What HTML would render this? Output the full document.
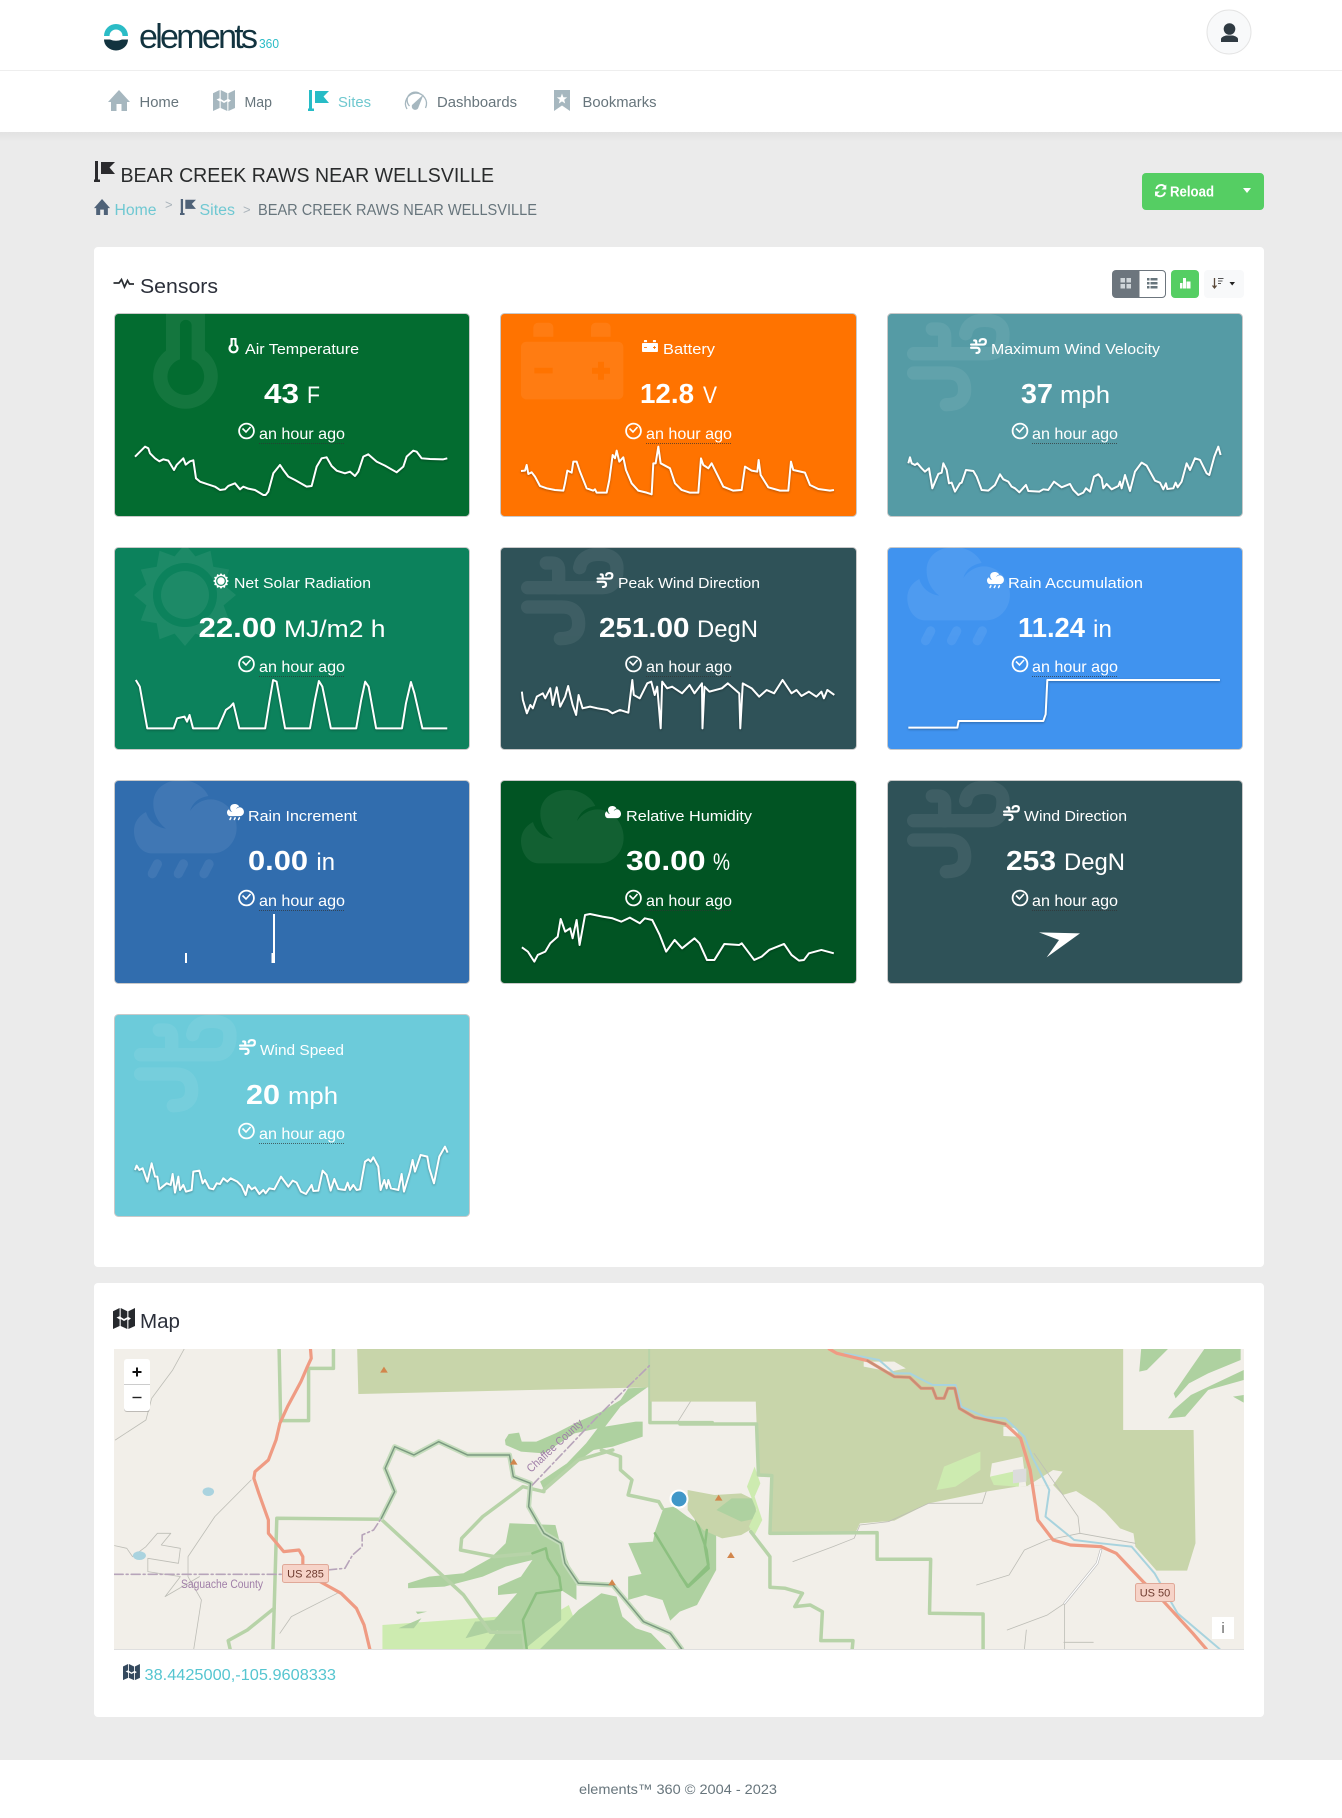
<!DOCTYPE html>
<html lang="en">
<head>
<meta charset="utf-8">
<title>BEAR CREEK RAWS NEAR WELLSVILLE</title>
<style>
html,body{margin:0;padding:0}
body{position:relative;width:1342px;height:1818px;overflow:hidden;background:#ebebeb;font-family:"Liberation Sans",sans-serif}
.abs{position:absolute}
#top{left:0;top:0;width:1342px;height:132px;background:#fff}
#topline{left:0;top:70px;width:1342px;height:1px;background:#eeeeee}
#shadow{left:0;top:132px;width:1342px;height:10px;background:linear-gradient(#e2e2e2,#ebebeb)}
.panel{left:94px;width:1170px;background:#fff;border-radius:4px}
#foot{left:0;top:1760px;width:1342px;height:58px;background:#fff}
svg{position:absolute;display:block;font-family:"Liberation Sans",sans-serif}
svg text{white-space:pre}
.card{overflow:hidden}
.t{font-size:15px;fill:#fff}
.v{font-size:28px;font-weight:700;fill:#fff}
.u{font-size:24px;fill:#fff}
.a{font-size:16px;fill:#fff}
.d{stroke:rgba(50,50,50,.7);stroke-width:1;stroke-dasharray:1 1;fill:none}
.s{fill:none;stroke:#fff;stroke-width:2;stroke-linejoin:round;vector-effect:non-scaling-stroke}
.sh{filter:drop-shadow(0 1px 1px rgba(0,0,0,.3))}
.n{font-size:14.5px;fill:#67757c}
.m,.m *{fill:none;vector-effect:non-scaling-stroke;stroke-linejoin:round;stroke-linecap:round}
.b{stroke:#b7d3a8;stroke-width:3.5}
.thin{stroke:#bdbdb6;stroke-width:.8}
.riv{stroke:#a8d3de;stroke-width:2}
.rd{stroke:#ef9b83;stroke-width:3.2}
.co{stroke:#b7a4ba;stroke-width:1.6;stroke-dasharray:9 3 2 3}
.bg{opacity:.07}
</style>
</head>
<body>
<div class="abs" id="top"></div>
<div class="abs" id="topline"></div>
<div class="abs" id="shadow"></div>
<div class="abs panel" style="top:247px;height:1020px"></div>
<div class="abs panel" style="top:1283px;height:434px"></div>
<div class="abs" id="foot"></div>

<svg width="0" height="0" style="left:0;top:0">
<defs>
<g id="wind" fill="none" stroke="#fff" stroke-width="40" stroke-linecap="round" stroke-linejoin="round">
<path d="M20 119H243Q288 119 288 62Q288 19 233 19Q183 19 176 59"/>
<path d="M76 45H93Q113 45 113 67V119"/>
<path d="M20 177H123Q173 177 173 227Q173 272 118 272"/>
</g>
<path id="cloud" fill="#fff" d="M53 220C18 220 0 183 0 153C0 128 13 108 36 96C43 123 68 143 96 146C73 128 58 103 58 70C58 28 93 0 140 0C178 0 210 20 223 48C193 53 176 68 168 93C183 70 208 58 230 58C273 58 308 98 308 143C308 188 273 220 238 220Z"/>
<g id="rain">
<use href="#cloud"/>
<path fill="none" stroke="#fff" stroke-width="28" stroke-linecap="round" d="M70 252L55 281M148 252L133 281M225 252L210 281"/>
</g>
<path id="sun" fill="#fff" fill-rule="evenodd" d="M51 0L38.6 10.4L44.2 25.5L28.3 28.3L25.5 44.2L10.4 38.6L0 51L-10.4 38.6L-25.5 44.2L-28.3 28.3L-44.2 25.5L-38.6 10.4L-51 0L-38.6 -10.4L-44.2 -25.5L-28.3 -28.3L-25.5 -44.2L-10.4 -38.6L0 -51L10.4 -38.6L25.5 -44.2L28.3 -28.3L44.2 -25.5L38.6 -10.4ZM32 0A32 32 0 1 0 -32 0A32 32 0 1 0 32 0ZM24 0A24 24 0 1 0 -24 0A24 24 0 1 0 24 0Z"/>
<path id="battery" fill="#fff" fill-rule="evenodd" d="M16 57H291a16 16 0 0 1 16 16V214a16 16 0 0 1-16 16H16a16 16 0 0 1-16-16V73a16 16 0 0 1 16-16ZM40 135h55v17H40ZM231 117h18v18h18v18h-18v18h-18v-18h-18v-18h18ZM37 42V14a14 14 0 0 1 14-14h32a14 14 0 0 1 14 14V42ZM210 42V14a14 14 0 0 1 14-14h31a14 14 0 0 1 14 14V42Z"/>
<path id="thermo" fill="#fff" fill-rule="evenodd" d="M38 0H155V122A97 97 0 1 1 38 122ZM80 47A17 17 0 0 1 115 47V148A55 55 0 1 1 80 148Z"/>
<g id="clock" fill="none" stroke="#fff" stroke-width="1.8"><circle r="7.4"/><path d="M-4-2.5L-.5 1L4-4" stroke-width="1.6"/></g>
<g id="mapi"><path d="M0 3.2L6.6 0V8.2L3.5 9.5L6.6 11.4V18L0 21ZM7.7 0L14.3 3.2V9.2L11 11L7.7 9ZM7.7 11L11 13L14.3 11.3V21L7.7 18ZM15.4 3.2L22 0V18L15.4 21V12.2L18 10.5L15.4 9Z"/></g>
<g id="flag"><path d="M1 0H4V18.5H6V21H0V18.5H1ZM7 1H21L15.5 6.5L21 13H7Z"/></g>
<g id="house"><path d="M11 0L22 12H19V21H13.5V14H8.5V21H3V12H0Z"/></g>
</defs>
</svg>

<!-- Header, nav, title -->
<svg class="abs" style="left:0;top:0" width="1342" height="310" viewBox="0 0 1342 310">
<path d="M104 36A12 12 0 0 1 128 36H122.5A6.5 6.5 0 0 0 109.5 36Z" fill="#2bbcc6"/>
<path d="M104 39.5H110Q116 42 122 39.5H128A12 11 0 0 1 104 39.5Z" fill="#12333f"/>
<text x="139" y="48" font-size="34" fill="#12333f" textLength="119" lengthAdjust="spacing">elements</text>
<text x="259" y="48" font-size="13" fill="#2bbcc6" textLength="20" lengthAdjust="spacingAndGlyphs">360</text>
<circle cx="1229" cy="32" r="22" fill="#f8f9fa" stroke="#e4e4e4"/>
<circle cx="1229.5" cy="29" r="5.8" fill="#2f3a42"/>
<path d="M1221 42V39Q1221 37 1226 35.5H1233Q1238 37 1238 39V42Z" fill="#2f3a42"/>

<g fill="#a6b7bf">
<use href="#house" transform="translate(108,90)"/>
<use href="#mapi" transform="translate(213,90)"/>
<path d="M407 109A10.500 10.500 0 1 1 425.500 108M409.500 106A8 8 0 0 1 421 94.500" fill="none" stroke="#a6b7bf" stroke-width="1.3"/>
<path d="M423.500 94.500L418 108.500A3.500 3.500 0 0 1 412 105Z"/>
<path fill-rule="evenodd" d="M554 90H570V111L562 105.5L554 111ZM562 93.5L563.4 97.2L567.2 97.4L564.2 99.8L565.2 103.5L562 101.4L558.8 103.5L559.8 99.8L556.8 97.4L560.6 97.2Z"/>
</g>
<use href="#flag" transform="translate(308,90)" fill="#27bcc6"/>
<text class="n" x="139.500" y="107" textLength="39.500" lengthAdjust="spacingAndGlyphs">Home</text>
<text class="n" x="244.500" y="107" textLength="27.500" lengthAdjust="spacingAndGlyphs">Map</text>
<text class="n" x="338" y="107" textLength="33" lengthAdjust="spacingAndGlyphs" style="fill:#6fc8cf">Sites</text>
<text class="n" x="437" y="107" textLength="80" lengthAdjust="spacingAndGlyphs">Dashboards</text>
<text class="n" x="582.500" y="107" textLength="74" lengthAdjust="spacingAndGlyphs">Bookmarks</text>

<use href="#flag" transform="translate(94,161)" fill="#2b2b2e"/>
<text x="120.500" y="182" font-size="20" fill="#292b2c" textLength="373.500" lengthAdjust="spacingAndGlyphs">BEAR CREEK RAWS NEAR WELLSVILLE</text>
<use href="#house" transform="translate(94,199) scale(.73,.76)" fill="#4f6278"/>
<text x="114.500" y="215" font-size="15.5" fill="#6fc8d2" textLength="42" lengthAdjust="spacingAndGlyphs">Home</text>
<text x="165" y="209" font-size="13" fill="#a9b3ba">&gt;</text>
<use href="#flag" transform="translate(180,199) scale(.76)" fill="#4f6278"/>
<text x="199.500" y="215" font-size="15.5" fill="#6fc8d2" textLength="35.500" lengthAdjust="spacingAndGlyphs">Sites</text>
<text x="243" y="214" font-size="13" fill="#a9b3ba">&gt;</text>
<text x="258" y="215" font-size="15.5" fill="#67757c" textLength="279" lengthAdjust="spacingAndGlyphs">BEAR CREEK RAWS NEAR WELLSVILLE</text>

<rect x="1142" y="173" width="122" height="37" rx="4" fill="#55ce63"/>
<path d="M1156.3 189a5 5 0 0 1 8.6-2.4M1165 192.4a5 5 0 0 1-8.6 2.2" fill="none" stroke="#fff" stroke-width="1.9"/>
<path d="M1166.3 184.5V189.5H1161.5ZM1155 196.5V191.5H1159.8Z" fill="#fff"/>
<text x="1170" y="196.5" font-size="14.5" font-weight="700" fill="#fff" textLength="44" lengthAdjust="spacingAndGlyphs">Reload</text>
<path d="M1243 188H1251L1247 193Z" fill="#fff"/>

<path d="M1112 274a4 4 0 0 1 4-4H1139V298H1116a4 4 0 0 1-4-4Z" fill="#6c757d"/>
<path d="M1139 270.5H1162a3.5 3.5 0 0 1 3.500 3.500V294a3.500 3.500 0 0 1-3.500 3.500H1139Z" fill="#fff" stroke="#6c757d"/>
<g fill="#cfd5d9"><rect x="1120.500" y="278" width="4.500" height="4.500"/><rect x="1126.500" y="278" width="4.500" height="4.500"/><rect x="1120.500" y="284" width="4.500" height="4.500"/><rect x="1126.500" y="284" width="4.500" height="4.500"/></g>
<g fill="#67757c"><rect x="1147" y="278" width="2.500" height="2.500"/><rect x="1150.500" y="278" width="7" height="2.500"/><rect x="1147" y="282" width="2.500" height="2.500"/><rect x="1150.500" y="282" width="7" height="2.500"/><rect x="1147" y="286" width="2.500" height="2.500"/><rect x="1150.500" y="286" width="7" height="2.500"/></g>
<rect x="1171" y="270" width="28" height="28" rx="4" fill="#55ce63"/>
<path d="M1180 288.500V283H1182.500V288.500ZM1183 288.500V278H1186V288.500ZM1186.500 288.500V281.500H1190.500V288.500Z" fill="#fff"/>
<rect x="1204" y="270" width="40" height="28" rx="4" fill="#f8f9fa"/>
<path d="M1214.500 278V287.500M1212.500 285.500L1214.500 288L1216.500 285.500" fill="none" stroke="#5b4a3a" stroke-width="1.3"/>
<path d="M1218 278.500H1223.500M1218 281H1222.500M1218 283.500H1221" stroke="#555" stroke-width="1.100"/>
<path d="M1229.500 282H1235L1232.200 285.500Z" fill="#222"/>

<path d="M113.500 283H119L121.500 279.500L124.500 287L127.500 280.500L129.500 284H134" fill="none" stroke="#2b2f33" stroke-width="1.700"/>
<text x="140" y="293" font-size="20.500" fill="#2b2f3a" textLength="78" lengthAdjust="spacingAndGlyphs">Sensors</text>
</svg>

<!-- Card 1 -->
<svg class="abs card" style="left:114px;top:313px" width="356" height="204" viewBox="114 313 356 204">
<rect x="114.500" y="313.500" width="355" height="203" rx="4" fill="#036c30" stroke="#c9c9c9"/>
<use href="#thermo" class="bg" transform="translate(153.300,310) scale(.3333)"/>
<use href="#thermo" transform="translate(228.500,338) scale(.052)"/>
<text class="t" x="245" y="354" textLength="114" lengthAdjust="spacingAndGlyphs">Air Temperature</text>
<text class="v" x="264" y="403" textLength="35" lengthAdjust="spacingAndGlyphs">43</text>
<text class="u" x="307" y="403" textLength="13" lengthAdjust="spacingAndGlyphs">F</text>
<use href="#clock" x="246.500" y="431"/>
<text class="a" x="259" y="439" textLength="86" lengthAdjust="spacingAndGlyphs">an hour ago</text>
<line class="d" x1="259" x2="345" y1="443.500" y2="443.500"/>
<g class="sh"><polyline class="s" transform="translate(100,260) scale(.3333)" points="105,590 120,575 135,560 145,565 150,580 165,595 178,604 190,598 205,602 222,630 230,615 250,595 257,614 270,604 280,601 288,655 300,665 320,672 345,680 360,690 375,688 385,678 405,670 420,688 430,680 445,686 465,690 490,705 497,705 505,695 520,640 540,615 550,630 565,650 585,660 620,680 635,678 650,620 665,595 680,592 695,618 710,632 735,640 750,635 765,648 775,635 790,590 805,583 830,605 855,617 890,637 910,620 920,590 940,572 950,575 965,595 990,597 1030,598 1042,595"/></g>
</svg>

<!-- Card 2 -->
<svg class="abs card" style="left:500px;top:313px" width="357" height="204" viewBox="500 313 357 204">
<rect x="500.500" y="313.500" width="356" height="203" rx="4" fill="#ff7300" stroke="#c9c9c9"/>
<use href="#battery" class="bg" transform="translate(521,322.700) scale(.3333)"/>
<use href="#battery" transform="translate(642,340) scale(.052)"/>
<text class="t" x="663" y="354" textLength="52" lengthAdjust="spacingAndGlyphs">Battery</text>
<text class="v" x="640" y="403" textLength="54" lengthAdjust="spacingAndGlyphs">12.8</text>
<text class="u" x="703" y="403" textLength="14" lengthAdjust="spacingAndGlyphs">V</text>
<use href="#clock" x="633.500" y="431"/>
<text class="a" x="646" y="439" textLength="86" lengthAdjust="spacingAndGlyphs">an hour ago</text>
<line class="d" x1="646" x2="732" y1="443.500" y2="443.500"/>
<g class="sh"><polyline class="s" transform="translate(490,300) scale(.3333)" points="93,513 105,512 110,495 115,522 125,517 135,530 150,558 170,565 195,570 220,572 225,550 232,512 245,518 250,485 260,485 270,515 290,565 310,572 315,568 320,578 350,578 358,540 368,465 375,475 380,452 388,485 400,472 408,510 425,550 445,572 470,578 485,583 490,490 497,490 505,440 512,490 540,505 555,550 575,570 600,578 625,578 633,475 640,495 655,505 665,490 680,520 700,560 730,572 755,570 765,500 785,512 802,515 806,480 812,525 835,562 870,572 895,572 903,485 910,510 945,518 960,555 985,567 1020,572 1032,570"/></g>
</svg>

<!-- Card 3 -->
<svg class="abs card" style="left:887px;top:313px" width="356" height="204" viewBox="887 313 356 204">
<rect x="887.500" y="313.500" width="355" height="203" rx="4" fill="#559ba5" stroke="#c9c9c9"/>
<use href="#wind" class="bg" transform="translate(907,314) scale(.3333)"/>
<use href="#wind" transform="translate(970,338) scale(.055)"/>
<text class="t" x="991" y="354" textLength="169" lengthAdjust="spacingAndGlyphs">Maximum Wind Velocity</text>
<text class="v" x="1021" y="403" textLength="32" lengthAdjust="spacingAndGlyphs">37</text>
<text class="u" x="1060" y="403" textLength="50" lengthAdjust="spacingAndGlyphs">mph</text>
<use href="#clock" x="1020" y="431"/>
<text class="a" x="1032" y="439" textLength="86" lengthAdjust="spacingAndGlyphs">an hour ago</text>
<line class="d" x1="1032" x2="1118" y1="443.500" y2="443.500"/>
<g class="sh"><polyline class="s" transform="translate(880,300) scale(.3333)" points="85,490 90,472 95,490 105,495 112,490 125,505 135,515 147,505 157,565 175,522 185,518 190,490 200,510 207,550 215,548 225,575 240,550 245,548 258,510 280,513 290,530 305,570 325,572 345,555 360,523 370,538 385,545 395,560 405,565 418,577 438,555 445,573 478,575 490,568 505,570 522,545 545,562 570,552 580,570 595,585 610,578 618,565 630,575 642,530 655,523 665,535 670,565 680,552 695,568 715,558 720,545 725,565 735,525 750,573 765,515 785,488 800,497 825,542 840,548 850,568 858,550 862,567 880,565 887,548 893,562 905,545 920,490 930,510 945,475 960,480 980,520 988,525 1003,470 1015,440 1022,465"/></g>
</svg>

<!-- Card 4 -->
<svg class="abs card" style="left:114px;top:547px" width="356" height="203" viewBox="114 547 356 203">
<rect x="114.500" y="547.500" width="355" height="202" rx="4" fill="#0c825c" stroke="#c9c9c9"/>
<use href="#sun" class="bg" transform="translate(185,595)"/>
<use href="#sun" transform="translate(221,581) scale(.155)"/>
<text class="t" x="234" y="588" textLength="137" lengthAdjust="spacingAndGlyphs">Net Solar Radiation</text>
<text class="v" x="198.500" y="637" textLength="78" lengthAdjust="spacingAndGlyphs">22.00</text>
<text class="u" x="284" y="637" textLength="101.500" lengthAdjust="spacingAndGlyphs">MJ/m2 h</text>
<use href="#clock" x="246.500" y="664"/>
<text class="a" x="259" y="672" textLength="86" lengthAdjust="spacingAndGlyphs">an hour ago</text>
<line class="d" x1="259" x2="345" y1="676.500" y2="676.500"/>
<g class="sh"><polyline class="s" transform="translate(100,540) scale(.4975,.3333)" points="72,420 80,440 95,565 148,565 155,535 170,530 175,545 180,525 187,565 237,565 253,510 262,500 268,490 280,565 332,565 340,490 348,420 355,425 372,565 422,565 432,480 440,423 447,440 464,565 515,565 525,480 533,425 540,440 555,565 607,565 615,490 625,426 632,460 648,565 698,565"/></g>
</svg>

<!-- Card 5 -->
<svg class="abs card" style="left:500px;top:547px" width="357" height="203" viewBox="500 547 357 203">
<rect x="500.500" y="547.500" width="356" height="202" rx="4" fill="#2f5258" stroke="#c9c9c9"/>
<use href="#wind" class="bg" transform="translate(521,548) scale(.3333)"/>
<use href="#wind" transform="translate(596.500,572) scale(.055)"/>
<text class="t" x="618" y="588" textLength="142" lengthAdjust="spacingAndGlyphs">Peak Wind Direction</text>
<text class="v" x="599" y="637" textLength="90.500" lengthAdjust="spacingAndGlyphs">251.00</text>
<text class="u" x="697" y="637" textLength="61" lengthAdjust="spacingAndGlyphs">DegN</text>
<use href="#clock" x="633.500" y="664"/>
<text class="a" x="646" y="672" textLength="86" lengthAdjust="spacingAndGlyphs">an hour ago</text>
<line class="d" x1="646" x2="732" y1="676.500" y2="676.500"/>
<g class="sh"><polyline class="s" transform="translate(100,540) scale(.4975,.3333)" points="848,455 850,480 858,520 865,495 870,505 878,470 890,460 895,475 905,445 910,495 918,442 925,500 935,470 941,438 950,495 957,525 962,465 970,505 985,500 1000,505 1020,510 1030,520 1045,510 1062,518 1070,420 1073,465 1085,475 1100,430 1108,425 1115,465 1120,440 1127,565 1130,425 1140,445 1150,440 1170,460 1185,435 1195,460 1210,430 1211,565 1215,440 1225,455 1250,445 1262,430 1285,460 1287,565 1292,430 1310,445 1325,470 1340,450 1355,460 1372,420 1390,460 1400,450 1410,468 1425,455 1440,470 1450,455 1455,475 1462,450 1476,465"/></g>
</svg>

<!-- Card 6 -->
<svg class="abs card" style="left:887px;top:547px" width="356" height="203" viewBox="887 547 356 203">
<rect x="887.500" y="547.500" width="355" height="202" rx="4" fill="#4093ef" stroke="#c9c9c9"/>
<use href="#rain" class="bg" transform="translate(907.300,547) scale(.3333)"/>
<use href="#rain" transform="translate(987,572) scale(.055)"/>
<text class="t" x="1008" y="588" textLength="135" lengthAdjust="spacingAndGlyphs">Rain Accumulation</text>
<text class="v" x="1018" y="637" textLength="67" lengthAdjust="spacingAndGlyphs">11.24</text>
<text class="u" x="1093" y="637" textLength="19" lengthAdjust="spacingAndGlyphs">in</text>
<use href="#clock" x="1020" y="664"/>
<text class="a" x="1032" y="672" textLength="86" lengthAdjust="spacingAndGlyphs">an hour ago</text>
<line class="d" x1="1032" x2="1118" y1="676.500" y2="676.500"/>
<g class="sh"><polyline class="s" transform="translate(880,300) scale(.3333)" points="85,1283 232,1283 236,1263 490,1263 497,1243 502,1140 1020,1140"/></g>
</svg>

<!-- Card 7 -->
<svg class="abs card" style="left:114px;top:780px" width="356" height="204" viewBox="114 780 356 204">
<rect x="114.500" y="780.500" width="355" height="203" rx="4" fill="#316dae" stroke="#c9c9c9"/>
<use href="#rain" class="bg" transform="translate(134,780) scale(.3333)"/>
<use href="#rain" transform="translate(227,804) scale(.055)"/>
<text class="t" x="248" y="821" textLength="109" lengthAdjust="spacingAndGlyphs">Rain Increment</text>
<text class="v" x="248" y="870" textLength="60" lengthAdjust="spacingAndGlyphs">0.00</text>
<text class="u" x="316.400" y="870" textLength="18.600" lengthAdjust="spacingAndGlyphs">in</text>
<use href="#clock" x="246.500" y="898"/>
<text class="a" x="259" y="906" textLength="86" lengthAdjust="spacingAndGlyphs">an hour ago</text>
<line class="d" x1="259" x2="345" y1="910.500" y2="910.500"/>
<path d="M186 953V963M274 914V963M272.500 953V963" stroke="#fff" stroke-width="2" fill="none"/>
</svg>

<!-- Card 8 -->
<svg class="abs card" style="left:500px;top:780px" width="357" height="204" viewBox="500 780 357 204">
<rect x="500.500" y="780.500" width="356" height="203" rx="4" fill="#015423" stroke="#c9c9c9"/>
<use href="#cloud" class="bg" transform="translate(521,790) scale(.3333)"/>
<use href="#cloud" transform="translate(605,806) scale(.052,.055)"/>
<text class="t" x="626" y="821" textLength="126" lengthAdjust="spacingAndGlyphs">Relative Humidity</text>
<text class="v" x="626" y="870" textLength="79.500" lengthAdjust="spacingAndGlyphs">30.00</text>
<text class="u" x="713" y="870" textLength="17" lengthAdjust="spacingAndGlyphs">%</text>
<use href="#clock" x="633.500" y="898"/>
<text class="a" x="646" y="906" textLength="86" lengthAdjust="spacingAndGlyphs">an hour ago</text>
<line class="d" x1="646" x2="732" y1="910.500" y2="910.500"/>
<g class="sh"><polyline class="s" transform="translate(100,540) scale(.4975,.3333)" points="848,1222 860,1235 873,1265 880,1245 895,1235 905,1210 920,1190 926,1137 935,1175 945,1165 950,1195 958,1140 964,1215 975,1125 985,1122 1010,1130 1030,1135 1048,1145 1065,1133 1085,1150 1095,1135 1110,1140 1125,1185 1138,1235 1155,1200 1170,1225 1195,1195 1205,1210 1220,1260 1235,1260 1255,1212 1285,1215 1290,1210 1315,1260 1330,1250 1345,1230 1375,1212 1390,1245 1405,1262 1415,1260 1425,1240 1450,1230 1475,1240"/></g>
</svg>

<!-- Card 9 -->
<svg class="abs card" style="left:887px;top:780px" width="356" height="204" viewBox="887 780 356 204">
<rect x="887.500" y="780.500" width="355" height="203" rx="4" fill="#2f5258" stroke="#c9c9c9"/>
<use href="#wind" class="bg" transform="translate(907,781) scale(.3333)"/>
<use href="#wind" transform="translate(1003,805) scale(.055)"/>
<text class="t" x="1024" y="821" textLength="103" lengthAdjust="spacingAndGlyphs">Wind Direction</text>
<text class="v" x="1006" y="870" textLength="50" lengthAdjust="spacingAndGlyphs">253</text>
<text class="u" x="1064" y="870" textLength="61" lengthAdjust="spacingAndGlyphs">DegN</text>
<use href="#clock" x="1020" y="898"/>
<text class="a" x="1032" y="906" textLength="86" lengthAdjust="spacingAndGlyphs">an hour ago</text>
<line class="d" x1="1032" x2="1118" y1="910.500" y2="910.500"/>
<polygon transform="translate(880,770) scale(.3333)" points="477,487 600,490 500,562 537,510" fill="#fff"/>
</svg>

<!-- Card 10 -->
<svg class="abs card" style="left:114px;top:1014px" width="356" height="203" viewBox="114 1014 356 203">
<rect x="114.500" y="1014.500" width="355" height="202" rx="4" fill="#6ccbda" stroke="#c9c9c9"/>
<use href="#wind" class="bg" transform="translate(134,1015) scale(.3333)"/>
<use href="#wind" transform="translate(239,1039) scale(.055)"/>
<text class="t" x="260" y="1055" textLength="84" lengthAdjust="spacingAndGlyphs">Wind Speed</text>
<text class="v" x="246" y="1104" textLength="34" lengthAdjust="spacingAndGlyphs">20</text>
<text class="u" x="288" y="1104" textLength="50" lengthAdjust="spacingAndGlyphs">mph</text>
<use href="#clock" x="246.500" y="1131"/>
<text class="a" x="259" y="1139" textLength="86" lengthAdjust="spacingAndGlyphs">an hour ago</text>
<line class="d" x1="259" x2="345" y1="1143.500" y2="1143.500"/>
<g class="sh"><polyline class="s" transform="translate(100,1000) scale(.3333)" points="105,510 110,497 118,510 128,505 142,545 155,490 165,530 172,530 178,568 200,550 212,555 218,522 225,578 235,530 240,570 250,555 258,575 275,570 280,515 298,512 308,550 315,540 328,565 340,568 350,550 360,552 370,535 382,545 392,535 412,545 425,558 437,585 445,555 455,568 465,562 478,582 490,570 497,580 508,565 523,568 543,530 565,560 578,542 590,548 603,575 618,582 635,555 640,573 655,572 668,512 680,525 692,572 703,537 715,567 735,570 743,548 750,570 760,555 770,570 780,568 795,485 805,478 812,485 820,472 835,500 842,570 853,540 860,565 865,540 873,565 895,570 905,522 912,575 930,515 938,480 945,515 962,465 982,470 988,505 1002,550 1018,470 1035,440 1043,458"/></g>
</svg>

<!-- Map panel header and link, footer -->
<svg class="abs" style="left:0;top:1300px" width="1342" height="518" viewBox="0 1300 1342 518">
<use href="#mapi" transform="translate(113,1308)" fill="#26292d"/>
<text x="140" y="1328" font-size="20.500" fill="#2b2f3a" textLength="40" lengthAdjust="spacingAndGlyphs">Map</text>
<line x1="114" x2="1244" y1="1649.500" y2="1649.500" stroke="#dfdfdf"/>
<use href="#mapi" transform="translate(123,1664) scale(.77)" fill="#34495e"/>
<text x="144.500" y="1680" font-size="16" fill="#55c5d0" textLength="191.500" lengthAdjust="spacingAndGlyphs">38.4425000,-105.9608333</text>
<text x="579" y="1794" font-size="14" fill="#67757c" textLength="198" lengthAdjust="spacingAndGlyphs">elements™ 360 © 2004 - 2023</text>
</svg>

<!-- Map -->
<svg class="abs" style="left:114px;top:1349px" width="1130" height="300" viewBox="114 1349 1130 300">
<rect x="114" y="1349" width="1131" height="300" fill="#f2efe9"/>

<g transform="translate(100,1300) scale(.3827,.3333)">
<polygon fill="#c8d5aa" points="672,147 1435,147 1435,262 675,282"/>
<polygon fill="#cdebb0" points="738,975 1040,950 1045,1047 738,1047"/>
<polygon fill="#cdebb0" points="1105,1047 1160,960 1225,915 1240,960 1190,1047"/>
<g fill="#aed1a0">
<polygon points="1058,420 1068,402 1095,398 1102,425 1140,425 1190,400 1250,365 1310,335 1360,300 1380,265 1430,262 1360,320 1320,380 1400,365 1418,365 1418,410 1340,440 1290,450 1230,500 1160,570 1150,545 1220,490 1270,430 1300,385 1240,400 1160,460 1100,455 1060,435"/>
<polygon points="1070,670 1190,675 1200,720 1245,850 1245,900 1205,870 1205,960 1160,1000 1110,1047 1005,1047 1040,990 955,1015 980,965 1030,960 1090,880 1040,885 1040,860 1100,830 1130,780 1060,800 1000,830 900,860 805,865 805,850 860,830 950,820 1020,775 1060,730"/>
<polygon points="1150,1047 1200,990 1250,930 1310,880 1350,890 1365,950 1400,985 1440,1000 1480,1047"/>
<polygon points="1380,730 1445,725 1450,695 1472,625 1500,620 1535,650 1610,700 1610,810 1560,915 1515,935 1490,962 1470,900 1425,885 1380,900 1380,830 1415,822"/>
<polygon points="780,985 840,955 820,985"/>
<polygon points="825,935 855,935 830,942"/>
</g>
<polyline class="m thin" points="220,147 190,210 135,295 120,360 40,420"/>
<polyline class="m thin" points="395,540 300,650 230,770 230,830 265,900 245,1047"/>
<polyline class="m thin" points="38,737 70,745 85,770 120,740 150,700 185,700 160,735 210,745 205,790 125,775 125,815 210,830 170,890 260,830"/>
<polyline class="m thin" points="470,1000 500,950 620,880"/>
<polyline class="m thin" points="1510,365 1540,310 1568,260"/>
<polyline class="m thin" points="1440,250 1500,210 1568,170"/>
<ellipse cx="283" cy="575" rx="15" ry="13" fill="#aad3df"/>
<ellipse cx="103" cy="767" rx="17" ry="13" fill="#aad3df"/>
<g class="m b">
<polyline points="468,147 472,362 545,362 545,205 610,205 610,147"/>
<polyline points="452,1047 462,655 735,658 950,885 1020,997 1105,997 1110,1047"/>
<polyline points="340,1047 335,1022 385,990 455,925"/>
<polyline points="1160,575 1105,560 1000,650 945,715 942,750 1030,770 1130,760"/>
<polyline points="1437,147 1437,368 1600,368"/>
<polyline points="1310,450 1360,470 1360,510 1390,540 1380,585 1460,605 1470,625"/>
<polyline points="1160,570 1250,480 1340,450"/>
</g>
<polyline class="m" stroke="#8cc080" stroke-width="2.500" points="1130,760 1165,745 1170,775 1200,830 1205,870 1140,880 1105,960 1115,1047"/>
<polyline class="m" stroke="#8cc080" stroke-width="2.500" points="1450,700 1535,860 1590,795 1585,750 1555,650"/>
<polyline class="m" stroke="#c5dcbc" stroke-width="5" points="735,655 770,575 745,505 770,440 820,465 885,425 960,465 1070,465 1080,530 1125,550 1120,620 1160,700 1205,730 1215,790 1250,850 1340,855 1420,965 1490,1000 1520,1047"/>
<polyline class="m" stroke="#7b9a80" stroke-width="1.500" points="735,655 770,575 745,505 770,440 820,465 885,425 960,465 1070,465 1080,530 1125,550 1120,620 1160,700 1205,730 1215,790 1250,850 1340,855 1420,965 1490,1000 1520,1047"/>
<polyline class="m co" points="37,823 480,823"/>
<polyline class="m co" points="595,810 640,805 660,765 685,740 685,705 715,690 735,655"/>
<polyline class="m co" points="1130,555 1300,350 1480,147"/>
<polyline class="m rd" points="550,147 552,175 540,205 525,245 490,320 470,370 460,420 440,480 405,515 402,535 415,580 440,660 440,700 480,755 520,750 530,770 530,795"/>
<polyline class="m rd" points="575,845 630,880 670,925 690,975 705,1047"/>
<g fill="#d2864c">
<polygon points="732,218 742,200 752,218"/>
<polygon points="1071,494 1081,476 1091,494"/>
<polygon points="1328,856 1338,838 1348,856"/>
</g>
</g>

<g transform="translate(680,1330) scale(.3827,.3333)">
<polygon fill="#c8d5aa" points="-78,57 1158,57 1158,300 1342,300 1347,640 1325,722 1245,722 1190,650 1185,610 1150,595 1110,545 1085,520 1035,483 1000,495 975,465 880,470 800,485 650,520 560,572 470,580 460,605 235,610 240,437 205,435 198,215 -78,215"/>
<polygon fill="#c8d5aa" points="20,480 90,495 160,490 195,510 205,585 160,615 110,625 60,600 20,540"/>
<polygon fill="#aed1a0" points="95,540 135,505 195,505 200,565 160,575"/>
<polygon fill="#cdebb0" points="175,470 195,410 210,460 195,500 215,570 195,615 180,590 200,540"/>
<polygon fill="#f2efe9" points="480,95 560,95 590,115 550,125 480,110"/>
<polygon fill="#f2efe9" points="845,290 880,295 885,320 845,318"/>
<polygon fill="#f2efe9" points="815,400 895,380 905,470 975,420 1000,425 975,465 880,470 810,440"/>
<polygon fill="#cdebb0" points="690,410 785,365 785,420 720,470 670,480"/>
<polygon fill="#cdebb0" points="810,440 890,420 885,470 820,465"/>
<polygon fill="#dcdcdc" points="870,420 905,415 905,455 870,460"/>
<g fill="#aed1a0">
<polygon points="1205,57 1275,57 1220,120 1200,125"/>
<polygon points="1370,57 1465,57 1465,90 1380,130 1330,160 1295,205 1290,190 1320,140"/>
<polygon points="1473,120 1473,150 1380,180 1320,260 1275,265 1290,240 1335,195"/>
<polygon points="1445,200 1473,195 1473,218"/>
</g>
<polyline class="m thin" points="295,695 400,650 455,625 470,585 545,575 650,520 790,520 800,485"/>
<polyline class="m thin" points="775,765 860,735 900,660 960,630 1045,610 1190,640"/>
<polyline class="m thin" points="855,900 960,855 1005,820 1005,957"/>
<polyline class="m thin" points="1003,937 1080,937"/>
<polyline class="m thin" points="925,370 1040,560 1045,610"/>
<polyline class="m thin" points="900,957 905,900"/>
<polyline class="m" stroke="#bbb" stroke-width="2.500" points="1005,820 1090,700 1100,660"/>
<polyline class="m" stroke="#fff" stroke-width="1.200" points="1005,820 1090,700 1100,660"/>
<g class="m b">
<polyline points="0,282 200,282 205,435 240,437 235,610 515,608 515,688 655,688 652,850 792,852 792,957"/>
<polyline points="185,605 235,680 235,772 275,775 320,790 300,830 340,825 372,845 368,932 452,932 450,957"/>
</g>
<polyline class="m" stroke="#8cc080" stroke-width="2.500" points="0,735 22,770 75,715 65,650 70,600"/>
<polyline class="m riv" points="430,70 520,90 560,130 600,130 660,165 720,165 735,230 800,262 850,265 900,320 920,380 965,480 955,560 1030,630 1100,640 1180,650 1240,730 1300,850 1410,957"/>
<polyline class="m rd" points="390,57 410,70 490,92 560,140 600,142 630,175 660,175 670,205 690,205 700,175 718,175 730,235 770,262 850,282 890,325 915,420 935,570 975,630 1020,645 1100,650 1140,670 1210,755 1260,810 1340,910 1375,957"/>
<polyline class="m" stroke="#a9846a" stroke-width="2.200" stroke-opacity=".55" points="490,92 560,140 600,142 630,175 660,175 670,205 690,205 700,175 718,175 730,235 770,262 850,282"/>
<g fill="#d2864c">
<polygon points="91,512 101,494 111,512"/>
<polygon points="123,684 133,666 143,684"/>
</g>
</g>

<text x="181" y="1588" font-size="11.500" fill="#a07fa8" textLength="82" lengthAdjust="spacingAndGlyphs">Saguache County</text>
<text transform="translate(531,1473) rotate(-43)" font-size="11.500" fill="#a07fa8" textLength="72" lengthAdjust="spacingAndGlyphs">Chaffee County</text>

<rect x="282.500" y="1564.500" width="46" height="18" rx="2" fill="#f6d3c8" stroke="#e0a898"/>
<text x="305.500" y="1577.500" font-size="11" fill="#6e3a2e" text-anchor="middle">US 285</text>
<rect x="1135.500" y="1583.500" width="39" height="18" rx="2" fill="#f6d3c8" stroke="#e0a898"/>
<text x="1155" y="1596.500" font-size="11" fill="#6e3a2e" text-anchor="middle">US 50</text>

<circle cx="679" cy="1499" r="8.500" fill="#4097c8" stroke="#fff" stroke-width="2"/>

<rect x="124" y="1360" width="26" height="52" rx="3" fill="#000" opacity=".22"/>
<rect x="124" y="1359" width="26" height="52" rx="3" fill="#fff"/>
<line x1="124" x2="150" y1="1384.500" y2="1384.500" stroke="#ccc"/>
<path d="M137 1367.500V1376.500M132.500 1372H141.500" stroke="#111" stroke-width="2"/>
<path d="M132.500 1397.500H141.500" stroke="#222" stroke-width="1.400"/>

<rect x="1212" y="1617" width="22" height="22" fill="#fff"/>
<text x="1223" y="1633" font-size="15" fill="#666" text-anchor="middle">i</text>
</svg>
</body>
</html>
